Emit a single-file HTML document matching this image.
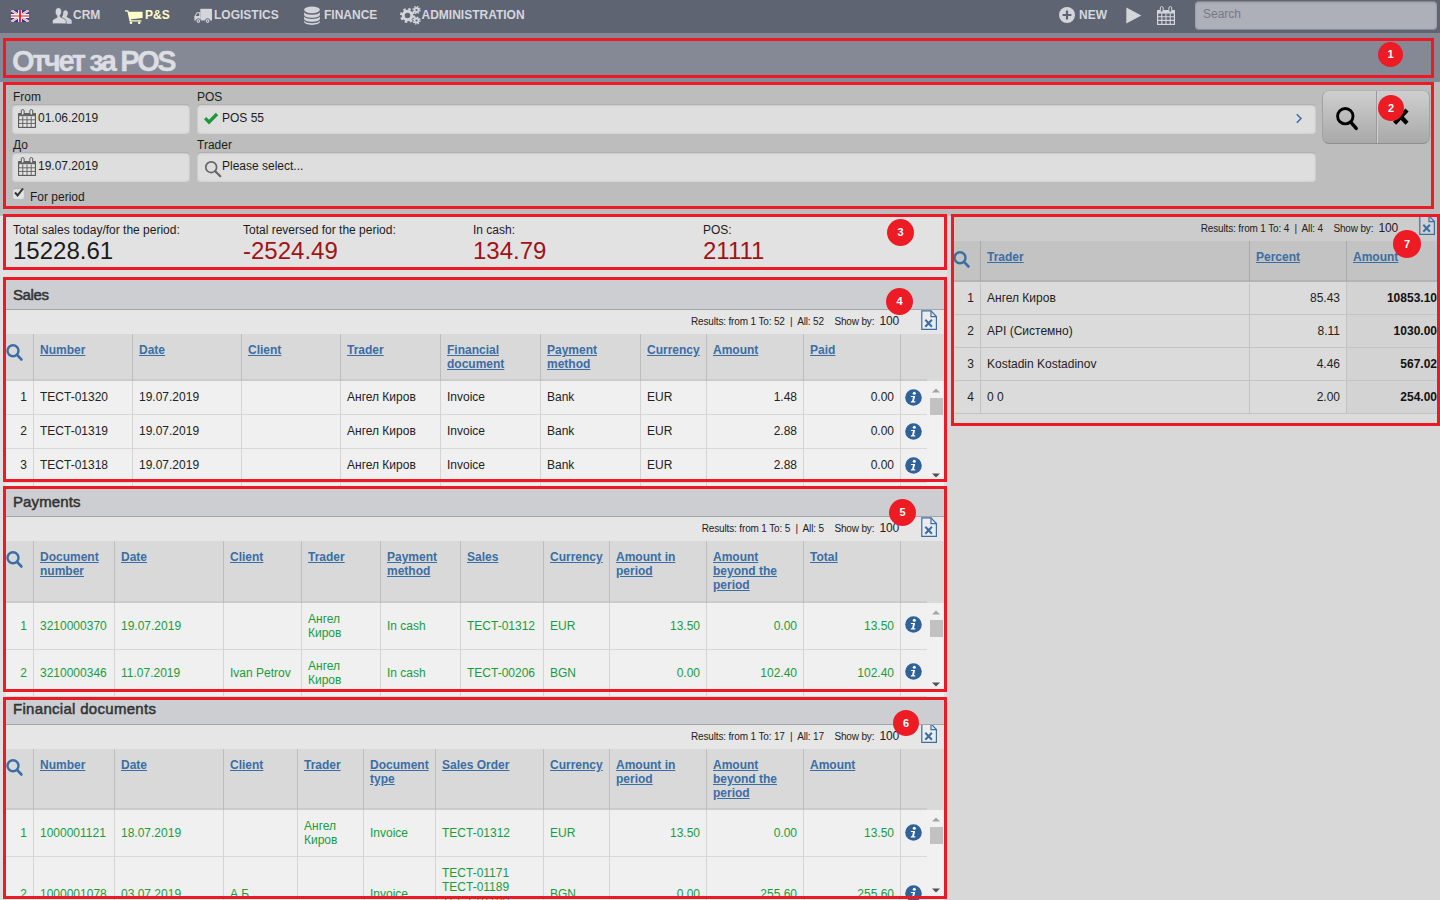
<!DOCTYPE html>
<html><head><meta charset="utf-8">
<style>
*{box-sizing:border-box;}
html,body{margin:0;padding:0;}
body{width:1440px;height:900px;overflow:hidden;position:relative;background:#e3e3e3;font-family:"Liberation Sans",sans-serif;font-size:12px;color:#222;}
.abs{position:absolute;}
#nav{left:0;top:0;width:1440px;height:33px;background:#5f6473;}
#titlebg{left:0;top:33px;width:1440px;height:49px;background:#858995;}
#filterbg{left:0;top:82px;width:1440px;height:134px;background:#bdbdbd;}
#title{left:12px;top:45px;font-size:29px;font-weight:bold;color:#dddee3;letter-spacing:-2.4px;line-height:32px;white-space:nowrap;-webkit-text-stroke:0.3px #dddee3;}
.rb{position:absolute;border:3px solid #ec1a24;pointer-events:none;z-index:20;}
.circ{position:absolute;border-radius:50%;background:#ec1b24;color:#fff;font-weight:bold;font-size:11px;text-align:center;z-index:30;}
.nav-item{position:absolute;top:0;height:33px;line-height:30px;color:#d6d7dc;font-weight:bold;font-size:12px;white-space:nowrap;}
.lbl{position:absolute;font-size:12px;color:#1c1c1c;line-height:14px;white-space:nowrap;}
.inp{position:absolute;background:#dedede;border-radius:4px;box-shadow:inset 0 1px 2px rgba(0,0,0,.28),0 1px 0 rgba(255,255,255,.35);font-size:12px;color:#222;line-height:28px;white-space:nowrap;}
.sec{position:absolute;background:#cdced2;border-bottom:1px solid #a4a5a8;font-weight:normal;font-size:15px;color:#333;white-space:nowrap;letter-spacing:-0.4px;-webkit-text-stroke:0.5px #333;}
.tb{position:absolute;background:#e6e6e6;}
.tbt{position:absolute;letter-spacing:-0.15px;font-size:10px;color:#222;white-space:nowrap;text-align:right;}
.tbt b{font-weight:normal;font-size:12px;letter-spacing:-0.2px;}
table{border-collapse:collapse;table-layout:fixed;position:absolute;}
th{background:#dadada;border-left:1px solid #bcbcbc;vertical-align:top;text-align:left;padding:9px 0 0 7px;font-size:12px;line-height:14px;font-weight:bold;color:#3a6ea5;}
th u{text-decoration:underline;}
th:first-child{border-left:none;padding:0;}
td{background:#f0f0f0;border-left:1px solid #d2d2d2;border-top:1px solid #d6d6d6;padding:0 0 0 7px;font-size:12px;line-height:14px;color:#222;vertical-align:middle;white-space:nowrap;}
td:first-child{border-left:none;text-align:right;padding:0 7px 0 0;}
td.r{text-align:right;padding:0 6px 0 0;}
.g td{color:#1f9a3c;}
.th{position:absolute;font-size:12px;line-height:14px;font-weight:bold;color:#3a6ea5;white-space:nowrap;}
.cell{position:absolute;display:flex;align-items:center;font-size:12px;line-height:14px;color:#222;white-space:nowrap;}
.cell span{display:block;width:100%;}
.cell.g{color:#189c3c;}
</style></head><body>
<div id="nav" class="abs"></div>
<div id="titlebg" class="abs"></div>
<div id="filterbg" class="abs"></div>
<div id="title" class="abs">Отчет за POS</div>
<!-- flag -->
<svg class="abs" style="left:11px;top:10px" width="18" height="12" viewBox="0 0 18 12">
<rect width="18" height="12" fill="#2b3990"/>
<path d="M0,0L18,12M18,0L0,12" stroke="#f4f0f4" stroke-width="2.400"/>
<path d="M0,0L18,12M18,0L0,12" stroke="#f08088" stroke-width=".9"/>
<path d="M9,0V12M0,6H18" stroke="#fbf3f5" stroke-width="3.800"/>
<path d="M0,6H18" stroke="#fb8589" stroke-width="2"/>
<path d="M9,0V12" stroke="#f0202a" stroke-width="1.900"/>
</svg>
<!-- CRM users icon -->
<svg class="abs" style="left:52px;top:7px" width="20" height="17" viewBox="0 0 20 17">
<path d="M13.500,3.300C15,3.300 15.900,4.500 15.900,6.100C15.900,7.500 15.400,8.600 14.800,9.200C14.800,10 15,10.400 16,10.800C18.300,11.800 19.700,12.500 19.700,14.200V16.800H10V9.500C11,9 11.200,7.500 11.200,6.100C11.200,4.500 12,3.300 13.500,3.300Z" fill="#d0d1d7"/>
<path d="M6.400,.7C8.300,.7 9.500,2.200 9.500,4.400C9.500,6.200 8.900,7.600 8,8.500C8,9.600 8.300,10 9.600,10.600C12.500,11.800 14.200,12.600 14.200,14.600V16.800H.4V14.600C.4,12.600 2.100,11.800 5,10.600C5.400,10.300 4.800,9.600 4.800,8.500C3.900,7.600 3.300,6.200 3.300,4.400C3.300,2.200 4.500,.7 6.400,.7Z" fill="#d6d7dc" stroke="#5f6473" stroke-width=".7"/>
</svg>
<div class="nav-item" style="left:73px">CRM</div>
<!-- cart -->
<svg class="abs" style="left:125px;top:10px" width="18" height="14" viewBox="0 0 18 14">
<g fill="#ffffc8"><path d="M0,.3h3.200l.7,1.500H17.600v6.200L5.800,9.200l.3,1h10.300v1.300H4.600L2.400,1.600H0z"/>
<circle cx="6" cy="12.700" r="1.300"/><circle cx="14.200" cy="12.700" r="1.300"/></g></svg>
<div class="nav-item" style="left:145px;color:#ffffc8">P&amp;S</div>
<!-- truck -->
<svg class="abs" style="left:194px;top:8px" width="18" height="16" viewBox="0 0 18 16">
<g fill="#d4d5da"><path d="M6.300,.8H18V12.500H6.300z"/><path d="M2.800,4.200H6.300V12.500H.4V8.200z"/></g>
<path d="M3.200,5.300H5.200V8H1.700z" fill="#5f6473"/>
<circle cx="4.400" cy="13" r="2.300" fill="#d4d5da" stroke="#5f6473" stroke-width=".9"/>
<circle cx="13.600" cy="13" r="2.300" fill="#d4d5da" stroke="#5f6473" stroke-width=".9"/>
<circle cx="4.400" cy="13" r=".8" fill="#5f6473"/><circle cx="13.600" cy="13" r=".8" fill="#5f6473"/>
</svg>
<div class="nav-item" style="left:214px">LOGISTICS</div>
<!-- db -->
<svg class="abs" style="left:303px;top:6px" width="18" height="19" viewBox="0 0 18 20">
<g fill="#d4d5da">
<ellipse cx="9" cy="4" rx="8.300" ry="3.600"/>
<path d="M.7,6.500c1.500,2 4.500,2.600 8.300,2.600s6.800-.6 8.300-2.600v2.600c0,1.800-3.700,3.200-8.300,3.200S.7,10.900.7,9.100z"/>
<path d="M.7,11.100c1.500,2 4.500,2.600 8.300,2.600s6.800-.6 8.300-2.600v2.400c0,1.800-3.700,3.200-8.300,3.200S.7,15.300.7,13.500z"/>
<path d="M.7,15.500c1.500,2 4.500,2.600 8.300,2.600s6.800-.6 8.300-2.600v1.200c0,1.800-3.700,3.200-8.300,3.200S.7,18.500.7,16.700z"/>
</g></svg>
<div class="nav-item" style="left:324px">FINANCE</div>
<!-- gears -->
<svg class="abs" style="left:400px;top:5px" width="22" height="20" viewBox="0 0 22 20">
<g fill="none" stroke="#d4d5da">
<circle cx="7.500" cy="10.500" r="4.300" stroke-width="3"/>
<circle cx="7.500" cy="10.500" r="6.400" stroke-width="2.200" stroke-dasharray="2.500 2.530"/>
<circle cx="16.500" cy="5" r="2" stroke-width="1.800"/>
<circle cx="16.500" cy="5" r="3.400" stroke-width="1.500" stroke-dasharray="1.400 1.270"/>
<circle cx="16.500" cy="15.500" r="2" stroke-width="1.800"/>
<circle cx="16.500" cy="15.500" r="3.400" stroke-width="1.500" stroke-dasharray="1.400 1.270"/>
</g></svg>
<div class="nav-item" style="left:421.500px">ADMINISTRATION</div>
<!-- new -->
<svg class="abs" style="left:1059px;top:7px" width="16" height="16" viewBox="0 0 16 16">
<circle cx="8" cy="8" r="8" fill="#d4d5da"/><path d="M8,3.600V12.400M3.600,8H12.400" stroke="#5f6473" stroke-width="2.200"/></svg>
<div class="nav-item" style="left:1079px">NEW</div>
<svg class="abs" style="left:1126px;top:7px" width="16" height="17" viewBox="0 0 16 17"><path d="M.3,.6L15.300,8.500L.3,16.400z" fill="#d4d5da"/></svg>
<!-- calendar -->
<svg class="abs" style="left:1157px;top:6px" width="18" height="19" viewBox="0 0 18 19">
<rect x=".6" y="4.600" width="16.800" height="13.800" fill="#5f6473" stroke="#d4d5da" stroke-width="1.200"/>
<rect x=".6" y="4.600" width="16.800" height="3" fill="#d4d5da"/>
<path d="M1,10.800H17M1,14.400H17M4.800,7.500V18M9,7.500V18M13.200,7.500V18" stroke="#d4d5da" stroke-width="1.100"/>
<rect x="3.300" y=".6" width="2.800" height="5.400" rx="1.300" fill="#5f6473" stroke="#d4d5da" stroke-width="1"/>
<rect x="11.900" y=".6" width="2.800" height="5.400" rx="1.300" fill="#5f6473" stroke="#d4d5da" stroke-width="1"/>
</svg>
<div class="abs" style="left:1195px;top:1px;width:242px;height:28px;background:#adb0b9;border-radius:4px;box-shadow:inset 0 1px 2px rgba(0,0,0,.3),0 1px 0 rgba(255,255,255,.25);color:#747987;font-size:12px;line-height:26px;padding-left:8px">Search</div>

<div class="lbl" style="left:13px;top:90px">From</div>
<div class="inp" style="left:12px;top:104px;width:178px;height:29px"></div>
<svg class="abs" style="left:18px;top:109px" width="18" height="19" viewBox="0 0 18 19">
<rect x=".6" y="4.600" width="16.800" height="13.800" fill="#e6e6e6" stroke="#555" stroke-width="1.100"/>
<rect x=".6" y="4.600" width="16.800" height="2.600" fill="#666"/>
<path d="M1,10.800H17M1,14.400H17M4.800,7.500V18M9,7.500V18M13.200,7.500V18" stroke="#666" stroke-width="1"/>
<rect x="3.300" y=".6" width="2.800" height="5.400" rx="1.300" fill="#e6e6e6" stroke="#555" stroke-width="1"/>
<rect x="11.900" y=".6" width="2.800" height="5.400" rx="1.300" fill="#e6e6e6" stroke="#555" stroke-width="1"/>
</svg>
<div class="lbl" style="left:38px;top:111px">01.06.2019</div>
<div class="lbl" style="left:197px;top:90px">POS</div>
<div class="inp" style="left:197px;top:104px;width:1119px;height:29px"></div>
<svg class="abs" style="left:203px;top:112px" width="16" height="13" viewBox="0 0 16 13"><path d="M1,7.200L3.200,5L6,7.800L12.800,.8L15.200,3.200L6,12.400z" fill="#1a9a3a"/></svg>
<div class="lbl" style="left:222px;top:111px">POS 55</div>
<svg class="abs" style="left:1295px;top:113px" width="8" height="11" viewBox="0 0 8 11"><path d="M1.800,1.200L6,5.500L1.800,9.800" fill="none" stroke="#3a6ea5" stroke-width="1.500"/></svg>
<div class="lbl" style="left:13px;top:138px">До</div>
<div class="inp" style="left:12px;top:152px;width:178px;height:29px"></div>
<svg class="abs" style="left:18px;top:157px" width="18" height="19" viewBox="0 0 18 19">
<rect x=".6" y="4.600" width="16.800" height="13.800" fill="#e6e6e6" stroke="#555" stroke-width="1.100"/>
<rect x=".6" y="4.600" width="16.800" height="2.600" fill="#666"/>
<path d="M1,10.800H17M1,14.400H17M4.800,7.500V18M9,7.500V18M13.200,7.500V18" stroke="#666" stroke-width="1"/>
<rect x="3.300" y=".6" width="2.800" height="5.400" rx="1.300" fill="#e6e6e6" stroke="#555" stroke-width="1"/>
<rect x="11.900" y=".6" width="2.800" height="5.400" rx="1.300" fill="#e6e6e6" stroke="#555" stroke-width="1"/>
</svg>
<div class="lbl" style="left:38px;top:159px">19.07.2019</div>
<div class="lbl" style="left:197px;top:138px">Trader</div>
<div class="inp" style="left:197px;top:152px;width:1119px;height:29px"></div>
<svg class="abs" style="left:204px;top:160px" width="18" height="18" viewBox="0 0 18 18"><circle cx="7.200" cy="7.200" r="5.400" fill="none" stroke="#666" stroke-width="1.700"/><path d="M11.200,11.200L16.300,16.300" stroke="#666" stroke-width="2.200" stroke-linecap="round"/></svg>
<div class="lbl" style="left:222px;top:159px">Please select...</div>
<div class="abs" style="left:13px;top:188px;width:11px;height:11px;background:#e4e4e4;border-radius:2px;box-shadow:inset 0 1px 1px rgba(0,0,0,.25)"></div>
<svg class="abs" style="left:13px;top:187px" width="12" height="11" viewBox="0 0 12 11"><path d="M2,5.500L4.600,8.400L10,1.500" fill="none" stroke="#333" stroke-width="2"/></svg>
<div class="lbl" style="left:30px;top:190px">For period</div>
<!-- buttons -->
<div class="abs" style="left:1322px;top:90px;width:108px;height:54px;border-radius:7px;background:linear-gradient(#cfcfcf,#a9a9a9);border:1px solid #a2a2a2;border-top-color:#b4b4b4;border-bottom-color:#8e8e8e"></div>
<div class="abs" style="left:1376px;top:91px;width:1px;height:52px;background:#9a9a9a"></div>
<div class="abs" style="left:1377px;top:91px;width:1px;height:52px;background:#cfcfcf"></div>
<svg class="abs" style="left:1335px;top:105px" width="26" height="28" viewBox="0 0 26 28"><circle cx="10.300" cy="11.200" r="7.700" fill="none" stroke="#000" stroke-width="2.900"/><path d="M16.200,17.600L21.200,23.400" stroke="#000" stroke-width="3.400" stroke-linecap="round"/></svg>
<svg class="abs" style="left:1390px;top:106px" width="22" height="22" viewBox="0 0 22 22"><path d="M4.600,4L17,17.200M17,4L4.600,17.200" stroke="#000" stroke-width="4.400"/></svg>
<div class="abs" style="left:0;top:216px;width:948px;height:684px;background:#e1e1e1"></div>
<div class="abs" style="left:6px;top:217px;width:937px;height:50px;background:#e2e2e2"></div>
<div class="lbl" style="left:13px;top:223px">Total sales today/for the period:</div>
<div class="lbl" style="left:13px;top:237px;font-size:24px;line-height:28px;color:#1a1a1a">15228.61</div>
<div class="lbl" style="left:243px;top:223px">Total reversed for the period:</div>
<div class="lbl" style="left:243px;top:237px;font-size:24px;line-height:28px;color:#a11216">-2524.49</div>
<div class="lbl" style="left:473px;top:223px">In cash:</div>
<div class="lbl" style="left:473px;top:237px;font-size:24px;line-height:28px;color:#a11216">134.79</div>
<div class="lbl" style="left:703px;top:223px">POS:</div>
<div class="lbl" style="left:703px;top:237px;font-size:24px;line-height:28px;color:#a11216">21111</div>

<!--SALES-->
<div class="sec" style="left:6px;top:280px;width:938px;height:30px;line-height:30px;letter-spacing:-0.4px;padding-left:7px">Sales</div>
<div class="tb" style="left:6px;top:310px;width:938px;height:24px"></div>
<div class="tbt" style="right:541px;top:313px;line-height:16px">Results: from 1 To: 52&nbsp; |&nbsp; All: 52&nbsp;&nbsp;&nbsp;&nbsp;Show by:&nbsp; <b>100</b></div>
<div style="position:absolute;left:921px;top:310px;width:18px;height:24px;overflow:hidden"><svg width="17" height="21" viewBox="0 0 17 21" style="position:absolute;left:0;top:0px"><path d="M.8,.8H10L15.400,6.600V19.400H.8z" fill="#ececec" stroke="#3a6ea5" stroke-width="1.200"/><path d="M10,.8V6.600H15.400" fill="none" stroke="#3a6ea5" stroke-width="1.200"/><path d="M4.300,9.800L10.900,16.800M10.900,9.800L4.300,16.800" stroke="#3a6ea5" stroke-width="2"/></svg></div>
<div class="abs" style="left:6px;top:334px;width:938px;height:47px;background:#d9d9d9"></div>
<div class="abs" style="left:6px;top:379px;width:921px;height:2px;background:#cbcbcb"></div>
<svg width="17" height="17" viewBox="0 0 17 17" style="position:absolute;left:6px;top:344px"><circle cx="7" cy="6.800" r="5.500" fill="none" stroke="#3a6ea5" stroke-width="2.400"/><path d="M11.300,11.100L15.300,15.400" stroke="#3a6ea5" stroke-width="2.800" stroke-linecap="round"/></svg>
<div class="abs" style="left:33px;top:334px;width:1px;height:47px;background:#bdbdbd"></div>
<div class="th" style="left:40px;top:343px"><u>Number</u></div>
<div class="abs" style="left:132px;top:334px;width:1px;height:47px;background:#bdbdbd"></div>
<div class="th" style="left:139px;top:343px"><u>Date</u></div>
<div class="abs" style="left:241px;top:334px;width:1px;height:47px;background:#bdbdbd"></div>
<div class="th" style="left:248px;top:343px"><u>Client</u></div>
<div class="abs" style="left:340px;top:334px;width:1px;height:47px;background:#bdbdbd"></div>
<div class="th" style="left:347px;top:343px"><u>Trader</u></div>
<div class="abs" style="left:440px;top:334px;width:1px;height:47px;background:#bdbdbd"></div>
<div class="th" style="left:447px;top:343px"><u>Financial<br>document</u></div>
<div class="abs" style="left:540px;top:334px;width:1px;height:47px;background:#bdbdbd"></div>
<div class="th" style="left:547px;top:343px"><u>Payment<br>method</u></div>
<div class="abs" style="left:640px;top:334px;width:1px;height:47px;background:#bdbdbd"></div>
<div class="th" style="left:647px;top:343px"><u>Currency</u></div>
<div class="abs" style="left:706px;top:334px;width:1px;height:47px;background:#bdbdbd"></div>
<div class="th" style="left:713px;top:343px"><u>Amount</u></div>
<div class="abs" style="left:803px;top:334px;width:1px;height:47px;background:#bdbdbd"></div>
<div class="th" style="left:810px;top:343px"><u>Paid</u></div>
<div class="abs" style="left:900px;top:334px;width:1px;height:47px;background:#bdbdbd"></div>
<div class="abs" style="left:6px;top:381px;width:938px;height:108px;overflow:hidden;background:#f0f0f0">
<div class="abs" style="left:0;top:33px;width:921px;height:1px;background:#d8d8d8"></div>
<div class="cell" style="left:0;top:-1px;width:27px;height:34px;text-align:right;padding-right:6px"><span>1</span></div>
<div class="cell" style="left:27px;top:-1px;width:99px;height:34px;padding-left:7px"><span>TECT-01320</span></div>
<div class="cell" style="left:126px;top:-1px;width:109px;height:34px;padding-left:7px"><span>19.07.2019</span></div>
<div class="cell" style="left:235px;top:-1px;width:99px;height:34px;padding-left:7px"><span></span></div>
<div class="cell" style="left:334px;top:-1px;width:100px;height:34px;padding-left:7px"><span>Ангел Киров</span></div>
<div class="cell" style="left:434px;top:-1px;width:100px;height:34px;padding-left:7px"><span>Invoice</span></div>
<div class="cell" style="left:534px;top:-1px;width:100px;height:34px;padding-left:7px"><span>Bank</span></div>
<div class="cell" style="left:634px;top:-1px;width:66px;height:34px;padding-left:7px"><span>EUR</span></div>
<div class="cell" style="left:700px;top:-1px;width:97px;height:34px;text-align:right;padding-right:6px"><span>1.48</span></div>
<div class="cell" style="left:797px;top:-1px;width:97px;height:34px;text-align:right;padding-right:6px"><span>0.00</span></div>
<svg width="17" height="17" viewBox="0 0 17 17" style="position:absolute;left:899px;top:8px"><circle cx="8.500" cy="8.500" r="8.300" fill="#2f6299"/><circle cx="9.300" cy="4.300" r="1.500" fill="#fff"/><path d="M6,7H10.200L8.900,12.300H10.400L10.200,13.400H5.800L6,12.300H7.100L8,8.100H5.800z" fill="#fff"/></svg>
<div class="abs" style="left:0;top:67px;width:921px;height:1px;background:#d8d8d8"></div>
<div class="cell" style="left:0;top:33px;width:27px;height:34px;text-align:right;padding-right:6px"><span>2</span></div>
<div class="cell" style="left:27px;top:33px;width:99px;height:34px;padding-left:7px"><span>TECT-01319</span></div>
<div class="cell" style="left:126px;top:33px;width:109px;height:34px;padding-left:7px"><span>19.07.2019</span></div>
<div class="cell" style="left:235px;top:33px;width:99px;height:34px;padding-left:7px"><span></span></div>
<div class="cell" style="left:334px;top:33px;width:100px;height:34px;padding-left:7px"><span>Ангел Киров</span></div>
<div class="cell" style="left:434px;top:33px;width:100px;height:34px;padding-left:7px"><span>Invoice</span></div>
<div class="cell" style="left:534px;top:33px;width:100px;height:34px;padding-left:7px"><span>Bank</span></div>
<div class="cell" style="left:634px;top:33px;width:66px;height:34px;padding-left:7px"><span>EUR</span></div>
<div class="cell" style="left:700px;top:33px;width:97px;height:34px;text-align:right;padding-right:6px"><span>2.88</span></div>
<div class="cell" style="left:797px;top:33px;width:97px;height:34px;text-align:right;padding-right:6px"><span>0.00</span></div>
<svg width="17" height="17" viewBox="0 0 17 17" style="position:absolute;left:899px;top:42px"><circle cx="8.500" cy="8.500" r="8.300" fill="#2f6299"/><circle cx="9.300" cy="4.300" r="1.500" fill="#fff"/><path d="M6,7H10.200L8.900,12.300H10.400L10.200,13.400H5.800L6,12.300H7.100L8,8.100H5.800z" fill="#fff"/></svg>
<div class="abs" style="left:0;top:101px;width:921px;height:1px;background:#d8d8d8"></div>
<div class="cell" style="left:0;top:67px;width:27px;height:34px;text-align:right;padding-right:6px"><span>3</span></div>
<div class="cell" style="left:27px;top:67px;width:99px;height:34px;padding-left:7px"><span>TECT-01318</span></div>
<div class="cell" style="left:126px;top:67px;width:109px;height:34px;padding-left:7px"><span>19.07.2019</span></div>
<div class="cell" style="left:235px;top:67px;width:99px;height:34px;padding-left:7px"><span></span></div>
<div class="cell" style="left:334px;top:67px;width:100px;height:34px;padding-left:7px"><span>Ангел Киров</span></div>
<div class="cell" style="left:434px;top:67px;width:100px;height:34px;padding-left:7px"><span>Invoice</span></div>
<div class="cell" style="left:534px;top:67px;width:100px;height:34px;padding-left:7px"><span>Bank</span></div>
<div class="cell" style="left:634px;top:67px;width:66px;height:34px;padding-left:7px"><span>EUR</span></div>
<div class="cell" style="left:700px;top:67px;width:97px;height:34px;text-align:right;padding-right:6px"><span>2.88</span></div>
<div class="cell" style="left:797px;top:67px;width:97px;height:34px;text-align:right;padding-right:6px"><span>0.00</span></div>
<svg width="17" height="17" viewBox="0 0 17 17" style="position:absolute;left:899px;top:76px"><circle cx="8.500" cy="8.500" r="8.300" fill="#2f6299"/><circle cx="9.300" cy="4.300" r="1.500" fill="#fff"/><path d="M6,7H10.200L8.900,12.300H10.400L10.200,13.400H5.800L6,12.300H7.100L8,8.100H5.800z" fill="#fff"/></svg>
<div class="abs" style="left:0;top:135px;width:921px;height:1px;background:#d8d8d8"></div>
<div class="cell" style="left:0;top:101px;width:27px;height:34px;text-align:right;padding-right:6px"><span>4</span></div>
<div class="cell" style="left:27px;top:101px;width:99px;height:34px;padding-left:7px"><span></span></div>
<div class="cell" style="left:126px;top:101px;width:109px;height:34px;padding-left:7px"><span></span></div>
<div class="cell" style="left:235px;top:101px;width:99px;height:34px;padding-left:7px"><span></span></div>
<div class="cell" style="left:334px;top:101px;width:100px;height:34px;padding-left:7px"><span></span></div>
<div class="cell" style="left:434px;top:101px;width:100px;height:34px;padding-left:7px"><span></span></div>
<div class="cell" style="left:534px;top:101px;width:100px;height:34px;padding-left:7px"><span></span></div>
<div class="cell" style="left:634px;top:101px;width:66px;height:34px;padding-left:7px"><span></span></div>
<div class="abs" style="left:27px;top:0;width:1px;height:108px;background:#d4d4d4"></div>
<div class="abs" style="left:126px;top:0;width:1px;height:108px;background:#d4d4d4"></div>
<div class="abs" style="left:235px;top:0;width:1px;height:108px;background:#d4d4d4"></div>
<div class="abs" style="left:334px;top:0;width:1px;height:108px;background:#d4d4d4"></div>
<div class="abs" style="left:434px;top:0;width:1px;height:108px;background:#d4d4d4"></div>
<div class="abs" style="left:534px;top:0;width:1px;height:108px;background:#d4d4d4"></div>
<div class="abs" style="left:634px;top:0;width:1px;height:108px;background:#d4d4d4"></div>
<div class="abs" style="left:700px;top:0;width:1px;height:108px;background:#d4d4d4"></div>
<div class="abs" style="left:797px;top:0;width:1px;height:108px;background:#d4d4d4"></div>
<div class="abs" style="left:894px;top:0;width:1px;height:108px;background:#d4d4d4"></div>
<div class="abs" style="left:921px;top:0;width:16px;height:108px;background:#f1f1f1"></div>
<svg style="position:absolute;left:926px;top:6.500px" width="8" height="5" viewBox="0 0 8 5"><path d="M0,4.500L4,.5L8,4.500z" fill="#a3a3a3"/></svg>
<div class="abs" style="left:924px;top:17px;width:13px;height:17px;background:#c1c1c1"></div>
<svg style="position:absolute;left:926px;top:92px" width="8" height="5" viewBox="0 0 8 5"><path d="M0,.5L4,4.500L8,.5z" fill="#505050"/></svg>
</div>
<!--/SALES-->
<!--PAY-->
<div class="sec" style="left:6px;top:489px;width:938px;height:28px;line-height:26px;letter-spacing:0.1px;padding-left:7px">Payments</div>
<div class="tb" style="left:6px;top:517px;width:938px;height:24px"></div>
<div class="tbt" style="right:541px;top:520px;line-height:16px">Results: from 1 To: 5&nbsp; |&nbsp; All: 5&nbsp;&nbsp;&nbsp;&nbsp;Show by:&nbsp; <b>100</b></div>
<div style="position:absolute;left:921px;top:517px;width:18px;height:24px;overflow:hidden"><svg width="17" height="21" viewBox="0 0 17 21" style="position:absolute;left:0;top:0px"><path d="M.8,.8H10L15.400,6.600V19.400H.8z" fill="#ececec" stroke="#3a6ea5" stroke-width="1.200"/><path d="M10,.8V6.600H15.400" fill="none" stroke="#3a6ea5" stroke-width="1.200"/><path d="M4.300,9.800L10.900,16.800M10.900,9.800L4.300,16.800" stroke="#3a6ea5" stroke-width="2"/></svg></div>
<div class="abs" style="left:6px;top:541px;width:938px;height:62px;background:#d9d9d9"></div>
<div class="abs" style="left:6px;top:601px;width:921px;height:2px;background:#cbcbcb"></div>
<svg width="17" height="17" viewBox="0 0 17 17" style="position:absolute;left:6px;top:551px"><circle cx="7" cy="6.800" r="5.500" fill="none" stroke="#3a6ea5" stroke-width="2.400"/><path d="M11.300,11.100L15.300,15.400" stroke="#3a6ea5" stroke-width="2.800" stroke-linecap="round"/></svg>
<div class="abs" style="left:33px;top:541px;width:1px;height:62px;background:#bdbdbd"></div>
<div class="th" style="left:40px;top:550px"><u>Document<br>number</u></div>
<div class="abs" style="left:114px;top:541px;width:1px;height:62px;background:#bdbdbd"></div>
<div class="th" style="left:121px;top:550px"><u>Date</u></div>
<div class="abs" style="left:223px;top:541px;width:1px;height:62px;background:#bdbdbd"></div>
<div class="th" style="left:230px;top:550px"><u>Client</u></div>
<div class="abs" style="left:301px;top:541px;width:1px;height:62px;background:#bdbdbd"></div>
<div class="th" style="left:308px;top:550px"><u>Trader</u></div>
<div class="abs" style="left:380px;top:541px;width:1px;height:62px;background:#bdbdbd"></div>
<div class="th" style="left:387px;top:550px"><u>Payment<br>method</u></div>
<div class="abs" style="left:460px;top:541px;width:1px;height:62px;background:#bdbdbd"></div>
<div class="th" style="left:467px;top:550px"><u>Sales</u></div>
<div class="abs" style="left:543px;top:541px;width:1px;height:62px;background:#bdbdbd"></div>
<div class="th" style="left:550px;top:550px"><u>Currency</u></div>
<div class="abs" style="left:609px;top:541px;width:1px;height:62px;background:#bdbdbd"></div>
<div class="th" style="left:616px;top:550px"><u>Amount in<br>period</u></div>
<div class="abs" style="left:706px;top:541px;width:1px;height:62px;background:#bdbdbd"></div>
<div class="th" style="left:713px;top:550px"><u>Amount<br>beyond the<br>period</u></div>
<div class="abs" style="left:803px;top:541px;width:1px;height:62px;background:#bdbdbd"></div>
<div class="th" style="left:810px;top:550px"><u>Total</u></div>
<div class="abs" style="left:900px;top:541px;width:1px;height:62px;background:#bdbdbd"></div>
<div class="abs" style="left:6px;top:603px;width:938px;height:97px;overflow:hidden;background:#f0f0f0">
<div class="abs" style="left:0;top:46px;width:921px;height:1px;background:#d8d8d8"></div>
<div class="cell g" style="left:0;top:-1px;width:27px;height:47px;text-align:right;padding-right:6px"><span>1</span></div>
<div class="cell g" style="left:27px;top:-1px;width:81px;height:47px;padding-left:7px"><span>3210000370</span></div>
<div class="cell g" style="left:108px;top:-1px;width:109px;height:47px;padding-left:7px"><span>19.07.2019</span></div>
<div class="cell g" style="left:217px;top:-1px;width:78px;height:47px;padding-left:7px"><span></span></div>
<div class="cell g" style="left:295px;top:-1px;width:79px;height:47px;padding-left:7px"><span>Ангел<br>Киров</span></div>
<div class="cell g" style="left:374px;top:-1px;width:80px;height:47px;padding-left:7px"><span>In cash</span></div>
<div class="cell g" style="left:454px;top:-1px;width:83px;height:47px;padding-left:7px"><span>TECT-01312</span></div>
<div class="cell g" style="left:537px;top:-1px;width:66px;height:47px;padding-left:7px"><span>EUR</span></div>
<div class="cell g" style="left:603px;top:-1px;width:97px;height:47px;text-align:right;padding-right:6px"><span>13.50</span></div>
<div class="cell g" style="left:700px;top:-1px;width:97px;height:47px;text-align:right;padding-right:6px"><span>0.00</span></div>
<div class="cell g" style="left:797px;top:-1px;width:97px;height:47px;text-align:right;padding-right:6px"><span>13.50</span></div>
<svg width="17" height="17" viewBox="0 0 17 17" style="position:absolute;left:899px;top:13px"><circle cx="8.500" cy="8.500" r="8.300" fill="#2f6299"/><circle cx="9.300" cy="4.300" r="1.500" fill="#fff"/><path d="M6,7H10.200L8.900,12.300H10.400L10.200,13.400H5.800L6,12.300H7.100L8,8.100H5.800z" fill="#fff"/></svg>
<div class="abs" style="left:0;top:93px;width:921px;height:1px;background:#d8d8d8"></div>
<div class="cell g" style="left:0;top:46px;width:27px;height:47px;text-align:right;padding-right:6px"><span>2</span></div>
<div class="cell g" style="left:27px;top:46px;width:81px;height:47px;padding-left:7px"><span>3210000346</span></div>
<div class="cell g" style="left:108px;top:46px;width:109px;height:47px;padding-left:7px"><span>11.07.2019</span></div>
<div class="cell g" style="left:217px;top:46px;width:78px;height:47px;padding-left:7px"><span>Ivan Petrov</span></div>
<div class="cell g" style="left:295px;top:46px;width:79px;height:47px;padding-left:7px"><span>Ангел<br>Киров</span></div>
<div class="cell g" style="left:374px;top:46px;width:80px;height:47px;padding-left:7px"><span>In cash</span></div>
<div class="cell g" style="left:454px;top:46px;width:83px;height:47px;padding-left:7px"><span>TECT-00206</span></div>
<div class="cell g" style="left:537px;top:46px;width:66px;height:47px;padding-left:7px"><span>BGN</span></div>
<div class="cell g" style="left:603px;top:46px;width:97px;height:47px;text-align:right;padding-right:6px"><span>0.00</span></div>
<div class="cell g" style="left:700px;top:46px;width:97px;height:47px;text-align:right;padding-right:6px"><span>102.40</span></div>
<div class="cell g" style="left:797px;top:46px;width:97px;height:47px;text-align:right;padding-right:6px"><span>102.40</span></div>
<svg width="17" height="17" viewBox="0 0 17 17" style="position:absolute;left:899px;top:60px"><circle cx="8.500" cy="8.500" r="8.300" fill="#2f6299"/><circle cx="9.300" cy="4.300" r="1.500" fill="#fff"/><path d="M6,7H10.200L8.900,12.300H10.400L10.200,13.400H5.800L6,12.300H7.100L8,8.100H5.800z" fill="#fff"/></svg>
<div class="abs" style="left:27px;top:0;width:1px;height:97px;background:#d4d4d4"></div>
<div class="abs" style="left:108px;top:0;width:1px;height:97px;background:#d4d4d4"></div>
<div class="abs" style="left:217px;top:0;width:1px;height:97px;background:#d4d4d4"></div>
<div class="abs" style="left:295px;top:0;width:1px;height:97px;background:#d4d4d4"></div>
<div class="abs" style="left:374px;top:0;width:1px;height:97px;background:#d4d4d4"></div>
<div class="abs" style="left:454px;top:0;width:1px;height:97px;background:#d4d4d4"></div>
<div class="abs" style="left:537px;top:0;width:1px;height:97px;background:#d4d4d4"></div>
<div class="abs" style="left:603px;top:0;width:1px;height:97px;background:#d4d4d4"></div>
<div class="abs" style="left:700px;top:0;width:1px;height:97px;background:#d4d4d4"></div>
<div class="abs" style="left:797px;top:0;width:1px;height:97px;background:#d4d4d4"></div>
<div class="abs" style="left:894px;top:0;width:1px;height:97px;background:#d4d4d4"></div>
<div class="abs" style="left:921px;top:0;width:16px;height:97px;background:#f1f1f1"></div>
<svg style="position:absolute;left:926px;top:6.500px" width="8" height="5" viewBox="0 0 8 5"><path d="M0,4.500L4,.5L8,4.500z" fill="#a3a3a3"/></svg>
<div class="abs" style="left:924px;top:17px;width:13px;height:17px;background:#c1c1c1"></div>
<svg style="position:absolute;left:926px;top:79px" width="8" height="5" viewBox="0 0 8 5"><path d="M0,.5L4,4.500L8,.5z" fill="#505050"/></svg>
</div>
<!--/PAY-->
<!--FIN-->
<div class="sec" style="left:6px;top:700px;width:938px;height:25px;line-height:17px;letter-spacing:0.3px;padding-left:7px">Financial documents</div>
<div class="tb" style="left:6px;top:725px;width:938px;height:24px"></div>
<div class="tbt" style="right:541px;top:728px;line-height:16px">Results: from 1 To: 17&nbsp; |&nbsp; All: 17&nbsp;&nbsp;&nbsp;&nbsp;Show by:&nbsp; <b>100</b></div>
<div style="position:absolute;left:921px;top:725px;width:18px;height:24px;overflow:hidden"><svg width="17" height="21" viewBox="0 0 17 21" style="position:absolute;left:0;top:-2px"><path d="M.8,.8H10L15.400,6.600V19.400H.8z" fill="#ececec" stroke="#3a6ea5" stroke-width="1.200"/><path d="M10,.8V6.600H15.400" fill="none" stroke="#3a6ea5" stroke-width="1.200"/><path d="M4.300,9.800L10.900,16.800M10.900,9.800L4.300,16.800" stroke="#3a6ea5" stroke-width="2"/></svg></div>
<div class="abs" style="left:6px;top:749px;width:938px;height:61px;background:#d9d9d9"></div>
<div class="abs" style="left:6px;top:808px;width:921px;height:2px;background:#cbcbcb"></div>
<svg width="17" height="17" viewBox="0 0 17 17" style="position:absolute;left:6px;top:759px"><circle cx="7" cy="6.800" r="5.500" fill="none" stroke="#3a6ea5" stroke-width="2.400"/><path d="M11.300,11.100L15.300,15.400" stroke="#3a6ea5" stroke-width="2.800" stroke-linecap="round"/></svg>
<div class="abs" style="left:33px;top:749px;width:1px;height:61px;background:#bdbdbd"></div>
<div class="th" style="left:40px;top:758px"><u>Number</u></div>
<div class="abs" style="left:114px;top:749px;width:1px;height:61px;background:#bdbdbd"></div>
<div class="th" style="left:121px;top:758px"><u>Date</u></div>
<div class="abs" style="left:223px;top:749px;width:1px;height:61px;background:#bdbdbd"></div>
<div class="th" style="left:230px;top:758px"><u>Client</u></div>
<div class="abs" style="left:297px;top:749px;width:1px;height:61px;background:#bdbdbd"></div>
<div class="th" style="left:304px;top:758px"><u>Trader</u></div>
<div class="abs" style="left:363px;top:749px;width:1px;height:61px;background:#bdbdbd"></div>
<div class="th" style="left:370px;top:758px"><u>Document<br>type</u></div>
<div class="abs" style="left:435px;top:749px;width:1px;height:61px;background:#bdbdbd"></div>
<div class="th" style="left:442px;top:758px"><u>Sales Order</u></div>
<div class="abs" style="left:543px;top:749px;width:1px;height:61px;background:#bdbdbd"></div>
<div class="th" style="left:550px;top:758px"><u>Currency</u></div>
<div class="abs" style="left:609px;top:749px;width:1px;height:61px;background:#bdbdbd"></div>
<div class="th" style="left:616px;top:758px"><u>Amount in<br>period</u></div>
<div class="abs" style="left:706px;top:749px;width:1px;height:61px;background:#bdbdbd"></div>
<div class="th" style="left:713px;top:758px"><u>Amount<br>beyond the<br>period</u></div>
<div class="abs" style="left:803px;top:749px;width:1px;height:61px;background:#bdbdbd"></div>
<div class="th" style="left:810px;top:758px"><u>Amount</u></div>
<div class="abs" style="left:900px;top:749px;width:1px;height:61px;background:#bdbdbd"></div>
<div class="abs" style="left:6px;top:810px;width:938px;height:90px;overflow:hidden;background:#f0f0f0">
<div class="abs" style="left:0;top:46px;width:921px;height:1px;background:#d8d8d8"></div>
<div class="cell g" style="left:0;top:-1px;width:27px;height:47px;text-align:right;padding-right:6px"><span>1</span></div>
<div class="cell g" style="left:27px;top:-1px;width:81px;height:47px;padding-left:7px"><span>1000001121</span></div>
<div class="cell g" style="left:108px;top:-1px;width:109px;height:47px;padding-left:7px"><span>18.07.2019</span></div>
<div class="cell g" style="left:217px;top:-1px;width:74px;height:47px;padding-left:7px"><span></span></div>
<div class="cell g" style="left:291px;top:-1px;width:66px;height:47px;padding-left:7px"><span>Ангел<br>Киров</span></div>
<div class="cell g" style="left:357px;top:-1px;width:72px;height:47px;padding-left:7px"><span>Invoice</span></div>
<div class="cell g" style="left:429px;top:-1px;width:108px;height:47px;padding-left:7px"><span>TECT-01312</span></div>
<div class="cell g" style="left:537px;top:-1px;width:66px;height:47px;padding-left:7px"><span>EUR</span></div>
<div class="cell g" style="left:603px;top:-1px;width:97px;height:47px;text-align:right;padding-right:6px"><span>13.50</span></div>
<div class="cell g" style="left:700px;top:-1px;width:97px;height:47px;text-align:right;padding-right:6px"><span>0.00</span></div>
<div class="cell g" style="left:797px;top:-1px;width:97px;height:47px;text-align:right;padding-right:6px"><span>13.50</span></div>
<svg width="17" height="17" viewBox="0 0 17 17" style="position:absolute;left:899px;top:14px"><circle cx="8.500" cy="8.500" r="8.300" fill="#2f6299"/><circle cx="9.300" cy="4.300" r="1.500" fill="#fff"/><path d="M6,7H10.200L8.900,12.300H10.400L10.200,13.400H5.800L6,12.300H7.100L8,8.100H5.800z" fill="#fff"/></svg>
<div class="abs" style="left:0;top:122px;width:921px;height:1px;background:#d8d8d8"></div>
<div class="cell g" style="left:0;top:46px;width:27px;height:76px;text-align:right;padding-right:6px"><span>2</span></div>
<div class="cell g" style="left:27px;top:46px;width:81px;height:76px;padding-left:7px"><span>1000001078</span></div>
<div class="cell g" style="left:108px;top:46px;width:109px;height:76px;padding-left:7px"><span>03.07.2019</span></div>
<div class="cell g" style="left:217px;top:46px;width:74px;height:76px;padding-left:7px"><span>А Б</span></div>
<div class="cell g" style="left:291px;top:46px;width:66px;height:76px;padding-left:7px"><span></span></div>
<div class="cell g" style="left:357px;top:46px;width:72px;height:76px;padding-left:7px"><span>Invoice</span></div>
<div class="cell g" style="left:429px;top:46px;width:108px;height:76px;padding-left:7px"><span>TECT-01171<br>TECT-01189<br>TECT-01190<br>TECT-01191</span></div>
<div class="cell g" style="left:537px;top:46px;width:66px;height:76px;padding-left:7px"><span>BGN</span></div>
<div class="cell g" style="left:603px;top:46px;width:97px;height:76px;text-align:right;padding-right:6px"><span>0.00</span></div>
<div class="cell g" style="left:700px;top:46px;width:97px;height:76px;text-align:right;padding-right:6px"><span>255.60</span></div>
<div class="cell g" style="left:797px;top:46px;width:97px;height:76px;text-align:right;padding-right:6px"><span>255.60</span></div>
<svg width="17" height="17" viewBox="0 0 17 17" style="position:absolute;left:899px;top:75px"><circle cx="8.500" cy="8.500" r="8.300" fill="#2f6299"/><circle cx="9.300" cy="4.300" r="1.500" fill="#fff"/><path d="M6,7H10.200L8.900,12.300H10.400L10.200,13.400H5.800L6,12.300H7.100L8,8.100H5.800z" fill="#fff"/></svg>
<div class="abs" style="left:27px;top:0;width:1px;height:90px;background:#d4d4d4"></div>
<div class="abs" style="left:108px;top:0;width:1px;height:90px;background:#d4d4d4"></div>
<div class="abs" style="left:217px;top:0;width:1px;height:90px;background:#d4d4d4"></div>
<div class="abs" style="left:291px;top:0;width:1px;height:90px;background:#d4d4d4"></div>
<div class="abs" style="left:357px;top:0;width:1px;height:90px;background:#d4d4d4"></div>
<div class="abs" style="left:429px;top:0;width:1px;height:90px;background:#d4d4d4"></div>
<div class="abs" style="left:537px;top:0;width:1px;height:90px;background:#d4d4d4"></div>
<div class="abs" style="left:603px;top:0;width:1px;height:90px;background:#d4d4d4"></div>
<div class="abs" style="left:700px;top:0;width:1px;height:90px;background:#d4d4d4"></div>
<div class="abs" style="left:797px;top:0;width:1px;height:90px;background:#d4d4d4"></div>
<div class="abs" style="left:894px;top:0;width:1px;height:90px;background:#d4d4d4"></div>
<div class="abs" style="left:921px;top:0;width:16px;height:90px;background:#f1f1f1"></div>
<svg style="position:absolute;left:926px;top:6.500px" width="8" height="5" viewBox="0 0 8 5"><path d="M0,4.500L4,.5L8,4.500z" fill="#a3a3a3"/></svg>
<div class="abs" style="left:924px;top:17px;width:13px;height:17px;background:#c1c1c1"></div>
<svg style="position:absolute;left:926px;top:78px" width="8" height="5" viewBox="0 0 8 5"><path d="M0,.5L4,4.500L8,.5z" fill="#505050"/></svg>
</div>
<!--/FIN-->
<!--RIGHT-->
<div class="abs" style="left:947px;top:216px;width:493px;height:684px;background:#d8d8d8"></div>
<div class="abs" style="left:954px;top:217px;width:486px;height:206px;background:#dbdbdb"></div>
<div class="abs" style="left:954px;top:217px;width:486px;height:24px;background:#cccccc"></div>
<div class="tbt" style="right:42px;top:220px;line-height:16px">Results: from 1 To: 4&nbsp; |&nbsp; All: 4&nbsp;&nbsp;&nbsp;&nbsp;Show by:&nbsp; <b>100</b></div>
<svg width="17" height="21" viewBox="0 0 17 21" style="position:absolute;left:1419px;top:215px"><path d="M.8,.8H10L15.400,6.600V19.400H.8z" fill="#d2d2d2" stroke="#3a6ea5" stroke-width="1.200"/><path d="M10,.8V6.600H15.400" fill="none" stroke="#3a6ea5" stroke-width="1.200"/><path d="M4.300,9.800L10.900,16.800M10.900,9.800L4.300,16.800" stroke="#3a6ea5" stroke-width="2"/></svg>
<div class="abs" style="left:954px;top:241px;width:486px;height:41px;background:#c3c3c3;border-bottom:2px solid #b4b4b4"></div>
<svg width="17" height="17" viewBox="0 0 17 17" style="position:absolute;left:953px;top:251px"><circle cx="7" cy="6.800" r="5.500" fill="none" stroke="#3a6ea5" stroke-width="2.400"/><path d="M11.300,11.100L15.300,15.400" stroke="#3a6ea5" stroke-width="2.800" stroke-linecap="round"/></svg>
<div class="abs" style="left:980px;top:241px;width:1px;height:41px;background:#a9a9a9"></div>
<div class="th" style="left:987px;top:250px"><u>Trader</u></div>
<div class="abs" style="left:1249px;top:241px;width:1px;height:41px;background:#a9a9a9"></div>
<div class="th" style="left:1256px;top:250px"><u>Percent</u></div>
<div class="abs" style="left:1346px;top:241px;width:1px;height:41px;background:#a9a9a9"></div>
<div class="th" style="left:1353px;top:250px"><u>Amount</u></div>
<div class="abs" style="left:954px;top:282px;width:486px;height:33px;background:#dbdbdb;border-bottom:1px solid #c4c4c4"></div>
<div class="abs" style="left:1346px;top:282px;width:94px;height:32px;background:#d3d3d3"></div>
<div class="cell" style="left:954px;top:282px;width:26px;height:32px;text-align:right;padding-right:6px"><span>1</span></div>
<div class="cell" style="left:980px;top:282px;width:269px;height:32px;padding-left:7px"><span>Ангел Киров</span></div>
<div class="cell" style="left:1249px;top:282px;width:97px;height:32px;text-align:right;padding-right:6px"><span>85.43</span></div>
<div class="cell" style="left:1346px;top:282px;width:94px;height:32px;text-align:right;padding-right:3px;font-weight:bold;color:#111"><span>10853.10</span></div>
<div class="abs" style="left:954px;top:315px;width:486px;height:33px;background:#dbdbdb;border-bottom:1px solid #c4c4c4"></div>
<div class="abs" style="left:1346px;top:315px;width:94px;height:32px;background:#d3d3d3"></div>
<div class="cell" style="left:954px;top:315px;width:26px;height:32px;text-align:right;padding-right:6px"><span>2</span></div>
<div class="cell" style="left:980px;top:315px;width:269px;height:32px;padding-left:7px"><span>API (Системно)</span></div>
<div class="cell" style="left:1249px;top:315px;width:97px;height:32px;text-align:right;padding-right:6px"><span>8.11</span></div>
<div class="cell" style="left:1346px;top:315px;width:94px;height:32px;text-align:right;padding-right:3px;font-weight:bold;color:#111"><span>1030.00</span></div>
<div class="abs" style="left:954px;top:348px;width:486px;height:33px;background:#dbdbdb;border-bottom:1px solid #c4c4c4"></div>
<div class="abs" style="left:1346px;top:348px;width:94px;height:32px;background:#d3d3d3"></div>
<div class="cell" style="left:954px;top:348px;width:26px;height:32px;text-align:right;padding-right:6px"><span>3</span></div>
<div class="cell" style="left:980px;top:348px;width:269px;height:32px;padding-left:7px"><span>Kostadin Kostadinov</span></div>
<div class="cell" style="left:1249px;top:348px;width:97px;height:32px;text-align:right;padding-right:6px"><span>4.46</span></div>
<div class="cell" style="left:1346px;top:348px;width:94px;height:32px;text-align:right;padding-right:3px;font-weight:bold;color:#111"><span>567.02</span></div>
<div class="abs" style="left:954px;top:381px;width:486px;height:33px;background:#dbdbdb;border-bottom:1px solid #c4c4c4"></div>
<div class="abs" style="left:1346px;top:381px;width:94px;height:32px;background:#d3d3d3"></div>
<div class="cell" style="left:954px;top:381px;width:26px;height:32px;text-align:right;padding-right:6px"><span>4</span></div>
<div class="cell" style="left:980px;top:381px;width:269px;height:32px;padding-left:7px"><span>0 0</span></div>
<div class="cell" style="left:1249px;top:381px;width:97px;height:32px;text-align:right;padding-right:6px"><span>2.00</span></div>
<div class="cell" style="left:1346px;top:381px;width:94px;height:32px;text-align:right;padding-right:3px;font-weight:bold;color:#111"><span>254.00</span></div>
<div class="abs" style="left:980px;top:283px;width:1px;height:131px;background:#c2c2c2"></div>
<div class="abs" style="left:1249px;top:283px;width:1px;height:131px;background:#c2c2c2"></div>
<div class="abs" style="left:1346px;top:283px;width:1px;height:131px;background:#c2c2c2"></div>
<!--/RIGHT-->
<div class="rb" style="left:3px;top:38px;width:1431px;height:40px"></div>
<div class="rb" style="left:3px;top:82px;width:1431px;height:127px"></div>
<div class="rb" style="left:3px;top:214px;width:944px;height:56px"></div>
<div class="rb" style="left:3px;top:277px;width:944px;height:205px"></div>
<div class="rb" style="left:3px;top:486px;width:944px;height:206px"></div>
<div class="rb" style="left:3px;top:697px;width:944px;height:202px"></div>
<div class="rb" style="left:951px;top:214px;width:489px;height:212px"></div>
<div class="circ" style="left:1378px;top:42px;width:25px;height:25px;line-height:25px">1</div>
<div class="circ" style="left:1378px;top:95px;width:26px;height:26px;line-height:26px">2</div>
<div class="circ" style="left:887px;top:219px;width:27px;height:27px;line-height:27px">3</div>
<div class="circ" style="left:886px;top:288px;width:27px;height:27px;line-height:27px">4</div>
<div class="circ" style="left:889px;top:499px;width:27px;height:27px;line-height:27px">5</div>
<div class="circ" style="left:893px;top:710px;width:26px;height:26px;line-height:26px">6</div>
<div class="circ" style="left:1393px;top:230px;width:28px;height:28px;line-height:28px">7</div>

</body></html>
